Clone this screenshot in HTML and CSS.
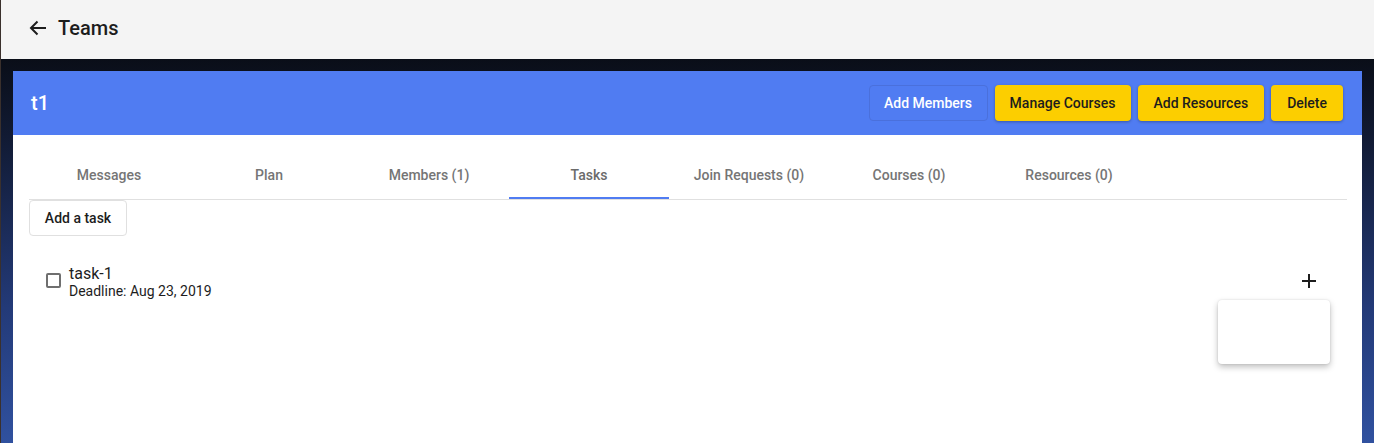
FILE: index.html
```html
<!DOCTYPE html>
<html>
<head>
<meta charset="utf-8">
<link rel="stylesheet" href="styles.css">
</head>
<body>
<div class="app">
  <header class="topbar">
    <svg class="back" width="18" height="16" viewBox="0 0 18 16"><path d="M17 8H2M8.5 1.5L2 8l6.5 6.5" fill="none" stroke="#1d1d1d" stroke-width="2"/></svg>
    <span class="title">Teams</span>
  </header>
  <main class="stage">
    <section class="card">
      <div class="card-head">
        <span class="team-name">t1</span>
        <div class="actions">
          <button class="btn btn-outline">Add Members</button>
          <button class="btn btn-yellow btn-courses">Manage Courses</button>
          <button class="btn btn-yellow">Add Resources</button>
          <button class="btn btn-yellow">Delete</button>
        </div>
      </div>
      <div class="card-body">
        <nav class="tabs">
          <div class="tab">Messages</div>
          <div class="tab">Plan</div>
          <div class="tab">Members (1)</div>
          <div class="tab active">Tasks</div>
          <div class="tab">Join Requests (0)</div>
          <div class="tab">Courses (0)</div>
          <div class="tab">Resources (0)</div>
        </nav>
        <button class="add-task">Add a task</button>
        <div class="task">
          <span class="checkbox"></span>
          <div class="task-text">
            <div class="task-name">task-1</div>
            <div class="task-deadline">Deadline: Aug 23, 2019</div>
          </div>
          <div class="task-side">
            <svg class="plus" width="14" height="14" viewBox="0 0 14 14"><path d="M7 0v14M0 7h14" stroke="#1d1d1d" stroke-width="2"/></svg>
            <div class="popup"></div>
          </div>
        </div>
      </div>
    </section>
  </main>
</div>
</body>
</html>
```
FILE: styles.css
```css
* { box-sizing: border-box; }
html, body { margin: 0; padding: 0; }
body {
  font-family: Roboto, "Noto Sans", sans-serif;
  width: 1374px;
  height: 443px;
  overflow: hidden;
  background: #3a302c;
}
.app {
  margin-left: 1px;
  height: 443px;
  display: flex;
  flex-direction: column;
}
.topbar {
  height: 59px;
  flex: none;
  background: #f4f4f4;
  display: flex;
  align-items: center;
  padding-left: 28px;
  padding-bottom: 3px;
}
.back { margin-right: 11px; }
.title {
  font-size: 20px;
  font-weight: 500;
  color: #1d1d1d;
}
.stage {
  flex: 1;
  background: linear-gradient(180deg, #0a0e18 0%, #111a33 20%, #233a78 65%, #30519f 100%);
  padding: 12px 12px 0 12px;
  display: flex;
}
.card {
  flex: 1;
  background: #fff;
  display: flex;
  flex-direction: column;
}
.card-head {
  height: 64px;
  background: #507cf2;
  display: flex;
  align-items: center;
  justify-content: space-between;
  padding: 0 19px 0 18px;
}
.team-name {
  color: #fff;
  font-size: 20px;
  font-weight: 500;
}
.actions { display: flex; gap: 7px; align-items: center; }
.btn {
  font-family: Roboto, sans-serif;
  font-size: 14px;
  font-weight: 500;
  height: 36px;
  border-radius: 4px;
  padding: 0 16px;
  cursor: pointer;
}
.btn-outline {
  background: #507cf2;
  color: #fff;
  border: 1px solid #4a70dc;
  padding: 0 14px;
  width: 119px;
}
.btn-yellow {
  background: #fcce00;
  color: #1d1d1d;
  border: none;
  box-shadow: 0 1px 3px rgba(0,0,0,0.3);
}
.btn-courses { width: 136px; padding: 0; }
.card-body {
  padding: 17px 15px 0 16px;
  display: flex;
  flex-direction: column;
  align-items: flex-start;
}
.tabs {
  display: flex;
  align-self: stretch;
  border-bottom: 1px solid #e0e0e0;
}
.tab {
  width: 160px;
  height: 47px;
  display: flex;
  align-items: center;
  justify-content: center;
  font-size: 14px;
  font-weight: 500;
  color: #757575;
  padding-bottom: 1px;
}
.tab.active {
  color: #6b6b6b;
  border-bottom: 2px solid #507cf2;
  padding-bottom: 0;
}
.add-task {
  margin-top: 0;
  height: 36px;
  width: 98px;
  background: #fff;
  border: 1px solid #e0e0e0;
  border-radius: 4px;
  font-family: Roboto, sans-serif;
  font-size: 14px;
  font-weight: 500;
  color: #1d1d1d;
  padding: 0;
}
.task {
  align-self: stretch;
  display: flex;
  align-items: flex-start;
  margin-top: 28px;
  padding-left: 17px;
  padding-right: 17px;
}
.checkbox {
  width: 15px;
  height: 15px;
  border: 2px solid #6f6f6f;
  border-radius: 2px;
  margin-top: 9px;
  margin-right: 8px;
}
.task-text { flex: 1; }
.task-name {
  font-size: 16px;
  color: #1d1d1d;
  line-height: 19px;
}
.task-deadline {
  font-size: 14px;
  color: #1d1d1d;
  line-height: 17px;
}
.task-side {
  display: flex;
  flex-direction: column;
  align-items: flex-end;
  padding-top: 10px;
}
.plus { margin-right: 14px; }
.popup {
  margin-top: 12px;
  width: 112px;
  height: 64px;
  background: #fff;
  border-radius: 4px;
  box-shadow: 0 3px 6px rgba(0,0,0,0.25), 0 0 2px rgba(0,0,0,0.12);
}
```
